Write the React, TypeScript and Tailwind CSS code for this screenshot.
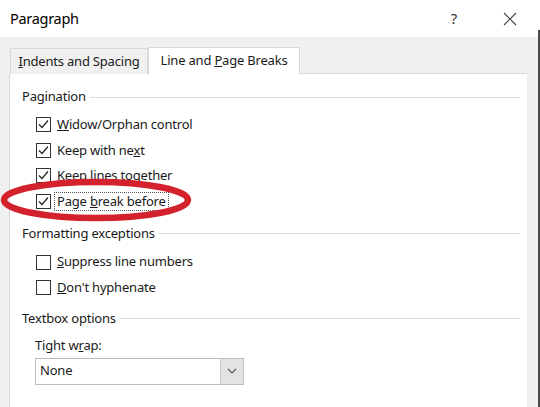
import React from "react";

const Check = ({ checked }: { checked: boolean }) => (
  <div className="w-[15px] h-[15px] border border-[#333] bg-white flex items-center justify-center shrink-0">
    {checked && (
      <svg width="13" height="13" viewBox="0 0 13 13">
        <path d="M2 6.5 L5 9.5 L11 2.5" fill="none" stroke="#222" strokeWidth="1.2" />
      </svg>
    )}
  </div>
);

const Row = ({
  checked,
  children,
  focus,
}: {
  checked: boolean;
  children: React.ReactNode;
  focus?: boolean;
}) => (
  <div className="h-[25.6px] flex items-center pl-[14px]">
    <Check checked={checked} />
    <span
      className={
        focus
          ? "ml-[3px] px-[2px] leading-[17px] inline-block border border-dotted border-[#555]"
          : "ml-[6px]"
      }
    >
      {children}
    </span>
  </div>
);

const GroupLabel = ({ children }: { children: React.ReactNode }) => (
  <div className="h-[18px] flex items-center mr-[7px]">
    <span className="mr-[4px]">{children}</span>
    <div className="flex-1 h-px bg-[#dcdcdc]" />
  </div>
);

export default function App() {
  return (
    <div
      className="w-[540px] h-[407px] flex overflow-hidden text-[13px] tracking-[-0.2px] text-[#1a1a1a]"
      style={{ fontFamily: '"Noto Sans", "Open Sans", sans-serif' }}
    >
      <div className="w-[538px] h-full flex flex-col bg-[#f0f0f0] relative">
        <div className="h-[37px] bg-white flex items-center pl-[10px] shrink-0">
          <span className="text-[14.5px] tracking-[-0.3px] text-black">Paragraph</span>
          <span className="ml-auto text-[15px] text-[#333] mr-[45px]">?</span>
          <svg width="16" height="16" viewBox="0 0 16 16" className="mr-[20px]">
            <path d="M2 2 L14 14 M14 2 L2 14" stroke="#444" strokeWidth="1.1" />
          </svg>
        </div>
        <div className="flex pl-[10px] mt-[10px] h-[26px] shrink-0 relative z-10">
          <div className="w-[138px] h-[26px] border border-b-0 border-[#d9d9d9] bg-[#f0f0f0] flex items-center justify-center mt-[1px]">
            <span>
              <u>I</u>ndents and Spacing
            </span>
          </div>
          <div className="w-[152px] h-[27px] border border-b-0 border-[#d9d9d9] bg-white flex items-center justify-center">
            <span>
              Line and <u>P</u>age Breaks
            </span>
          </div>
        </div>
        <div className="ml-[9px] w-[518px] flex-1 bg-white border-l border-t border-[#d9d9d9] pl-[12px] pt-[14px]">
          <GroupLabel>Pagination</GroupLabel>
          <div className="mt-[6px]">
            <Row checked>
              <u>W</u>idow/Orphan control
            </Row>
            <Row checked>
              Keep with ne<u>x</u>t
            </Row>
            <Row checked>
              Keep <u>l</u>ines together
            </Row>
            <Row checked focus>
              Page <u>b</u>reak before
            </Row>
          </div>
          <div className="mt-[10px]">
            <GroupLabel>Formatting exceptions</GroupLabel>
          </div>
          <div className="mt-[7px]">
            <Row checked={false}>
              <u>S</u>uppress line numbers
            </Row>
            <Row checked={false}>
              <u>D</u>on't hyphenate
            </Row>
          </div>
          <div className="mt-[9px]">
            <GroupLabel>Textbox options</GroupLabel>
          </div>
          <div className="mt-[9px] pl-[13px] h-[18px] flex items-center">
            <span>
              Tight w<u>r</u>ap:
            </span>
          </div>
          <div className="mt-[3px] ml-[13px] w-[209px] h-[27px] border border-[#bdbdbd] flex">
            <div className="flex-1 flex items-center pl-[4px]">None</div>
            <div className="w-[23px] bg-[#e3e3e3] border-l border-[#c4c4c4] flex items-center justify-center">
              <svg width="10" height="6" viewBox="0 0 10 6">
                <path d="M1 1 L5 5 L9 1" fill="none" stroke="#555" strokeWidth="1.1" />
              </svg>
            </div>
          </div>
        </div>
        <svg
          className="absolute left-0 top-[176px]"
          width="200"
          height="50"
          viewBox="0 0 200 50"
        >
          <ellipse
            cx="96"
            cy="24"
            rx="92"
            ry="18"
            fill="none"
            stroke="#d3222c"
            strokeWidth="6.5"
          />
        </svg>
      </div>
      <div className="w-[2px] h-full flex flex-col">
        <div className="h-[30px] bg-white" />
        <div className="flex-1 bg-[#4a4a4a]" />
      </div>
    </div>
  );
}
